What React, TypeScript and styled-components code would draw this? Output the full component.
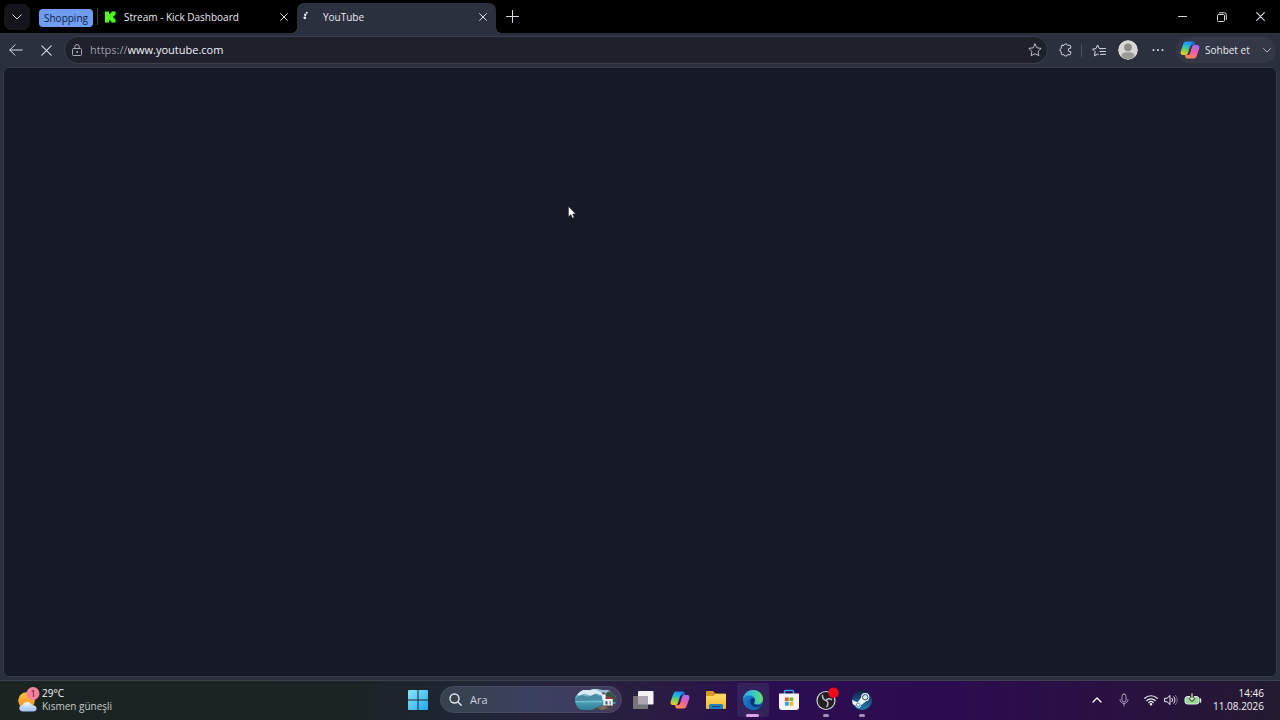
import React from "react";
import styled, { createGlobalStyle } from "styled-components";

const FONT = `"Open Sans", "Noto Sans", sans-serif`;

const GlobalStyle = createGlobalStyle`
  * { box-sizing: border-box; }
  html, body { margin: 0; background: #151a26; }
  body { font-family: ${FONT}; font-size: 10px; line-height: 14px; color: #e8e9ee; }
  button, input { font: inherit; color: inherit; margin: 0; padding: 0; border: 0; background: none; outline: none; }
  svg { display: block; flex: none; }
`;

const Desktop = styled.div`
  min-height: 100vh;
  display: flex;
  flex-direction: column;
  background: #2b303f;
`;

const TabStrip = styled.header`
  height: 33px;
  flex: none;
  display: flex;
  align-items: center;
  padding-left: 4px;
  background: #000;
`;

const TabMenuButton = styled.button`
  width: 26px;
  height: 26px;
  display: grid;
  place-items: center;
  border-radius: 7px;
  background: #14161c;
`;

const GroupChip = styled.button`
  height: 18px;
  margin: 3px 4px 0 9px;
  padding: 0 5px;
  border-radius: 4px;
  background: #6f9df2;
  color: #10203f;
  font-size: 10px;
  line-height: 17px;
`;

const Separator = styled.span<{ $height: number; $color: string }>`
  width: 1px;
  height: ${(p) => p.$height}px;
  flex: none;
  background: ${(p) => p.$color};
`;

const Tabs = styled.div`
  display: flex;
  align-self: stretch;
`;

const Tab = styled.div<{ $active?: boolean }>`
  position: relative;
  width: 199px;
  margin-top: 3px;
  padding: 0 8px 2px 6px;
  display: flex;
  align-items: center;
  border-radius: 7px 7px 0 0;
  background: ${(p) => (p.$active ? "#2b303f" : "transparent")};

  &::before,
  &::after {
    content: "";
    display: ${(p) => (p.$active ? "block" : "none")};
    position: absolute;
    bottom: 0;
    width: 6px;
    height: 6px;
  }
  &::before {
    left: -6px;
    background: radial-gradient(circle at 0 0, transparent 6px, #2b303f 6px);
  }
  &::after {
    right: -6px;
    background: radial-gradient(circle at 100% 0, transparent 6px, #2b303f 6px);
  }
`;

const TabTitle = styled.span`
  flex: 1;
  margin-left: 8px;
  white-space: nowrap;
`;

const IconButton = styled.button<{ $w?: number; $h?: number }>`
  width: ${(p) => p.$w ?? 30}px;
  height: ${(p) => p.$h ?? 26}px;
  flex: none;
  display: grid;
  place-items: center;
`;

const WindowControls = styled.div`
  margin-left: auto;
  display: flex;
`;

const Toolbar = styled.nav`
  height: 34px;
  flex: none;
  display: flex;
  align-items: center;
  padding: 0 4px 0 1px;
`;

const AddressBar = styled.label`
  flex: 1;
  height: 28px;
  margin: 0 3px;
  padding-left: 6px;
  display: flex;
  align-items: center;
  border: 1px solid #3a3e4c;
  border-radius: 14px;
  background: #1e212c;
  font-size: 11px;
  line-height: 16px;
`;

const Scheme = styled.span`
  margin-left: 7px;
  color: #9b9faa;
`;

const AddressInput = styled.input`
  flex: 1;
  min-width: 0;
  color: #f3f4f8;
`;

const Avatar = styled.button`
  width: 20px;
  height: 20px;
  margin: 0 5px 0 2px;
  border-radius: 50%;
  overflow: hidden;
`;

const ChatPill = styled.button`
  height: 26px;
  width: 100px;
  margin-left: 3px;
  padding: 0 5px 0 4px;
  display: flex;
  align-items: center;
  gap: 5px;
  border-radius: 13px;
  background: #333746;
  white-space: nowrap;

  svg:last-child { margin-left: auto; }
`;

const PageView = styled.main`
  flex: 1;
  margin: 0 3px 3px;
  border: 1px solid #363b49;
  border-radius: 6px;
  background: #151a26;
`;

const Pointer = styled.svg`
  position: absolute;
  left: 568px;
  top: 206px;
`;

const Taskbar = styled.footer`
  height: 40px;
  flex: none;
  display: grid;
  grid-template-columns: 1fr auto 1fr;
  align-items: center;
  padding-bottom: 2px;
  border-top: 1px solid #3b404d;
  background: linear-gradient(
    90deg,
    #1c2422 0%,
    #1a2424 27%,
    #1e2634 36%,
    #291e40 50%,
    #2b0e50 60%,
    #2c0c50 74%,
    #2a1042 86%,
    #231a30 100%
  );
`;

const Weather = styled.button`
  justify-self: start;
  margin-left: 18px;
  display: flex;
  align-items: center;
  gap: 2px;
  text-align: left;
  color: #c3c9c7;
  line-height: 13px;

  strong { display: block; font-weight: 400; color: #f4f6f5; }
`;

const TaskCenter = styled.div`
  display: flex;
  align-items: center;
`;

const SearchBox = styled.label`
  width: 182px;
  height: 27px;
  margin: 0 5px 0 6px;
  padding: 0 3px 0 8px;
  display: flex;
  align-items: center;
  border: 1px solid #4b4c63;
  border-radius: 14px;
  background: linear-gradient(90deg, #36434b, #3a4060 50%, #43395c);
  font-size: 11px;

  input { flex: 1; min-width: 0; margin-left: 8px; }
  input::placeholder { color: #ccd0dc; opacity: 1; }
`;

const AppRow = styled.div`
  width: 251px;
  display: flex;
  justify-content: space-between;
`;

const AppButton = styled.button<{ $state?: "active" | "open" }>`
  position: relative;
  width: 32px;
  height: 34px;
  display: grid;
  place-items: center;
  border-radius: 4px;
  background: ${(p) => (p.$state === "active" ? "#34225a" : "transparent")};

  &::after {
    content: "";
    display: ${(p) => (p.$state ? "block" : "none")};
    position: absolute;
    bottom: 0;
    left: calc(50% - ${(p) => (p.$state === "active" ? 7 : 3)}px);
    width: ${(p) => (p.$state === "active" ? 13 : 6)}px;
    height: 3px;
    border-radius: 2px;
    background: ${(p) => (p.$state === "active" ? "#dba3ea" : "#a58fb8")};
  }
`;

const Tray = styled.div`
  justify-self: end;
  display: flex;
  align-items: center;
  padding-right: 16px;
`;

const TrayStatus = styled.button`
  display: flex;
  align-items: center;
  gap: 6px;
  margin: 0 11px 0 6px;
`;

const Clock = styled.button`
  text-align: right;
  line-height: 13px;
  color: #f4f2f7;

  time { display: block; }
`;

type StrokeProps = { w?: number; h?: number; box?: string; color?: string; sw?: number; children: React.ReactNode };
const Line = ({ w = 12, h = 12, box, color = "#d9dbe2", sw = 1, children }: StrokeProps) => (
  <svg width={w} height={h} viewBox={box ?? `0 0 ${w} ${h}`} fill="none" stroke={color} strokeWidth={sw}
    strokeLinecap="round" strokeLinejoin="round" aria-hidden="true">{children}</svg>
);

const Cross = ({ size = 8, color }: { size?: number; color?: string }) => (
  <Line w={size} h={size} box="0 0 8 8" sw={size > 9 ? 0.8 : 1} color={color}><path d="M.6.6l6.8 6.8M7.4.6L.6 7.4" /></Line>
);

const CopilotIcon = ({ id, size }: { id: string; size: number }) => (
  <svg width={size} height={size} viewBox="0 0 20 20" aria-hidden="true">
    <defs>
      <linearGradient id={`${id}a`} x1="0.6" y1="0" x2="0.3" y2="1">
        <stop offset="0" stopColor="#1c8df0" /><stop offset=".35" stopColor="#22b8d8" />
        <stop offset=".65" stopColor="#75cf5c" /><stop offset="1" stopColor="#f5c62b" />
      </linearGradient>
      <linearGradient id={`${id}b`} x1="0.7" y1="0" x2="0.3" y2="1">
        <stop offset="0" stopColor="#a66cf0" /><stop offset=".45" stopColor="#ec5aa8" />
        <stop offset="1" stopColor="#ff8a4a" />
      </linearGradient>
    </defs>
    <path d="M6.3 1.5h6.2c1.2 0 1.8.8 2.1 1.8l.5 1.7H12c-1.2 0-1.7.7-2.1 1.8L8 13c-.4 1.3-1 2-2.300 2H3C.8 15 .2 13.300.7 11.500L3.300 4c.6-1.700 1.500-2.500 3-2.500z" fill={`url(#${id}a)`} />
    <path d="M13.700 18.500H7.500c-1.200 0-1.800-.8-2.100-1.800L4.900 15H8c1.200 0 1.700-.7 2.100-1.800L12 7c.4-1.300 1-2 2.300-2H17c2.200 0 2.800 1.700 2.300 3.500L16.700 16c-.6 1.700-1.500 2.500-3 2.500z" fill={`url(#${id}b)`} />
    <path d="M12.500 1.500c1.200 0 1.800.8 2.100 1.800l.5 1.700H12c-.8 0-1.300.4-1.700 1z" fill="#2360d8" />
  </svg>
);

const KickIcon = () => (
  <svg width="12" height="12" viewBox="0 0 12 12" aria-hidden="true">
    <path fill="#4dfc1e" d="M1 .5h4v2.500h1.300V1.700h1.200V.5h4v3.700h-1.300v1.200H9v1.200h1.200v1.200h1.300v3.700h-4v-1H6.300V9.200H5v2.300H1z" />
  </svg>
);

const WeatherIcon = () => (
  <svg width="22" height="26" viewBox="0 0 22 26" aria-hidden="true">
    <defs>
      <linearGradient id="sun" x1="0" y1="0" x2="0" y2="1"><stop offset="0" stopColor="#ffc43a" /><stop offset="1" stopColor="#f08a2a" /></linearGradient>
      <linearGradient id="cloud" x1="0" y1="0" x2="0" y2="1"><stop offset="0" stopColor="#f2f8ff" /><stop offset="1" stopColor="#9dbdf0" /></linearGradient>
    </defs>
    <circle cx="8.500" cy="13.500" r="8.300" fill="url(#sun)" />
    <path d="M5 24.500c-2.300 0-3.700-1.400-3.700-3.200S2.800 18.100 4.700 18.100C5.400 16 7.200 15 9.300 15c2.400 0 4 1.400 4.700 3.300 2.600-.3 4.600 1 4.600 3.200 0 1.900-1.500 3-3.500 3z" fill="url(#cloud)" />
    <circle cx="15" cy="6.500" r="6.500" fill="#fb7f9f" />
    <text x="15" y="10" fontSize="9" textAnchor="middle" fill="#43202c">1</text>
  </svg>
);

const StartIcon = () => (
  <svg width="20" height="20" viewBox="0 0 20 20" aria-hidden="true">
    <defs><linearGradient id="win" x1="0" y1="0" x2="1" y2="1"><stop offset="0" stopColor="#8be6fb" /><stop offset="1" stopColor="#22a7ee" /></linearGradient></defs>
    <path fill="url(#win)" d="M1 0h8.500v9.500H0V1a1 1 0 0 1 1-1zM10.500 0H19a1 1 0 0 1 1 1v8.500h-9.500zM0 10.500h9.500V20H1a1 1 0 0 1-1-1zM10.500 10.500H20V19a1 1 0 0 1-1 1h-8.500z" />
  </svg>
);

const LighthouseArt = () => (
  <svg width="44" height="23" viewBox="0 0 42 21" preserveAspectRatio="none" aria-hidden="true">
    <defs>
      <linearGradient id="sea" x1="0" y1="0" x2="0" y2="1"><stop offset="0" stopColor="#a8d7ea" /><stop offset=".5" stopColor="#56a6c2" /><stop offset="1" stopColor="#2e7b90" /></linearGradient>
      <clipPath id="scene"><path d="M1 10c0-3 2-4 4-6 3-3 7-2 10-2 4-2 9-1 13 0 5-1 8 1 9 4 3 1 4 4 3 7-1 4-4 7-9 7H9c-5 0-8-4-8-10z" /></clipPath>
    </defs>
    <g clipPath="url(#scene)">
      <rect width="42" height="21" fill="url(#sea)" />
      <path d="M0 10l6-4 7 2 7-3 8 4v2L0 12z" fill="#4a8ba6" />
      <path d="M3 6c3-4 7-5 10-4 4-2 9 0 13 2l2 3-7-2-5 2-6-2-5 2z" fill="#d9edf5" />
      <path d="M0 12h27v1H0z" fill="#7cc6d2" />
      <path d="M14 21c5-1 8-4 13-5l15-2v7z" fill="#4c4348" />
      <path d="M30 6c2-4 6-4 8-1 3 1 4 4 3 8h-8z" fill="#345247" />
      <path d="M28 10h9v6h-9z" fill="#eef0f0" />
      <path d="M27 10l2-2h7l2 2zM27 4h3v2h-3z" fill="#8f3d36" />
      <path d="M27 6h3v5h-3z" fill="#f5f5f2" />
      <path d="M30 12h2v3h-2zM34 12h1v3h-1z" fill="#41566d" />
      <path d="M22 18l6-2 5 2-6 2z" fill="#7b6c5e" />
    </g>
  </svg>
);

const TaskViewIcon = () => (
  <svg width="22" height="22" viewBox="0 0 22 22" aria-hidden="true">
    <rect x="6" y="2" width="15.500" height="13.500" rx="1" fill="#f3f2f5" />
    <rect x="1" y="7" width="15" height="13" rx="1" fill="#77747d" />
    <path d="M6 7h10v8.500H6z" fill="#aaa8ae" />
  </svg>
);

const FolderIcon = () => (
  <svg width="22" height="20" viewBox="0 0 22 20" aria-hidden="true">
    <defs><linearGradient id="fold" x1="0" y1="0" x2="0" y2="1"><stop offset="0" stopColor="#ffdc68" /><stop offset="1" stopColor="#f2b92f" /></linearGradient></defs>
    <path d="M2 1h6l2.500 2.500H20a1 1 0 0 1 1 1V10H1V2a1 1 0 0 1 1-1z" fill="#d99a1e" />
    <path d="M1 6h7l2.500-2H20a1 1 0 0 1 1 1v13a1 1 0 0 1-1 1H2a1 1 0 0 1-1-1z" fill="url(#fold)" />
    <path d="M4 19v-3.500A1.500 1.500 0 0 1 5.500 14h11a1.500 1.500 0 0 1 1.500 1.500V19z" fill="#1f7fc0" />
    <path d="M7 16h8v1.200H7z" fill="#124f86" />
  </svg>
);

const EdgeIcon = () => (
  <svg width="22" height="22" viewBox="0 0 22 22" aria-hidden="true">
    <defs>
      <linearGradient id="edgeTop" x1="0" y1=".5" x2="1" y2=".4"><stop offset="0" stopColor="#2aa5e8" /><stop offset=".55" stopColor="#35c9c6" /><stop offset="1" stopColor="#72e05c" /></linearGradient>
      <linearGradient id="edgeLow" x1="0" y1="0" x2="1" y2="1"><stop offset="0" stopColor="#1c8fdd" /><stop offset="1" stopColor="#114a9c" /></linearGradient>
    </defs>
    <circle cx="11" cy="11" r="10" fill="url(#edgeLow)" />
    <path d="M1 10.500C1.300 5 5.700 1 11 1c6 0 10 4.500 10 9 0 3.500-2.500 5.300-5.300 5.300-2.400 0-3.700-.8-3.700-1.600 0-.7 1-1.200 1-3C13 8.200 10.700 6.500 7.500 6.500 4 6.500 1.700 8.500 1 10.500z" fill="url(#edgeTop)" />
    <path d="M9.400 9.500c-2 2.700-1.400 6.900 2.300 8.700 2.800 1.300 5.700.6 7.700-1.400-2 3-5 4.200-8.200 4.200C7 20.500 5 17.500 5.300 14.300c.2-2.400 2-4.300 4.100-4.800z" fill="#1669b8" />
    <path d="M9.400 9.500c-.9 1.200-1.300 2.800-.9 4.400 1 3 4.500 4.300 7.500 3.800 1.900-.3 3.200-1 3.800-1.600-2 .9-6.600.5-7.700-1.400-.3-.5-.2-.9.100-1.300.8-1 .9-2.300.3-3.400-.7-1.200-2.200-1.200-3.100-.5z" fill="#0b3472" />
  </svg>
);

const StoreIcon = () => (
  <svg width="22" height="22" viewBox="0 0 22 22" aria-hidden="true">
    <path d="M6.500 5V2.500a1 1 0 0 1 1-1h7a1 1 0 0 1 1 1V5" fill="none" stroke="#2fa4e8" strokeWidth="1.500" />
    <path d="M1 4.500h20V18a3 3 0 0 1-3 3H4a3 3 0 0 1-3-3z" fill="#f4f4f7" />
    <path d="M7 8.500h3.700v3.700H7z" fill="#e9512c" /><path d="M11.500 8.500h3.700v3.700h-3.700z" fill="#7cb82f" />
    <path d="M7 13h3.700v3.700H7z" fill="#25a2e2" /><path d="M11.500 13h3.700v3.700h-3.700z" fill="#f6b61c" />
  </svg>
);

const ObsIcon = () => (
  <svg width="26" height="26" viewBox="0 0 26 26" aria-hidden="true">
    <circle cx="13" cy="13.500" r="9" fill="#211f24" stroke="#d8d5dc" strokeWidth="1.200" />
    <path d="M9.500 8.300c-.1 3 1.200 4.800 3.800 5.200M18.500 12.500c-2.500-1.500-4.500-.8-5.200 1M13.800 19.500c1.500-2 1.200-4.500-.5-6" fill="none" stroke="#bdbac2" strokeWidth="1.500" strokeLinecap="round" />
    <circle cx="20.500" cy="5.800" r="5.200" fill="#f3081a" />
  </svg>
);

const SteamIcon = () => (
  <svg width="22" height="22" viewBox="0 0 22 22" aria-hidden="true">
    <defs>
      <linearGradient id="steam" x1="0" y1="0" x2="0" y2="1"><stop offset="0" stopColor="#10203f" /><stop offset="1" stopColor="#2380b6" /></linearGradient>
      <clipPath id="steamDisc"><circle cx="11" cy="11" r="10" /></clipPath>
    </defs>
    <circle cx="11" cy="11" r="10" fill="url(#steam)" />
    <g clipPath="url(#steamDisc)">
      <path d="M0 10.500l6.500 2.800L10.300 8.500l4.700 4-4.800 3.400c-.3 3.500-4.700 3.800-5.600.6L0 14.700z" fill="#f2f6fa" />
      <circle cx="14.200" cy="8.200" r="4.100" fill="#f2f6fa" />
      <circle cx="14.200" cy="8.200" r="2.700" fill="#dfe8f0" stroke="#1b3d65" strokeWidth=".9" />
      <circle cx="7.200" cy="15.800" r="1.800" fill="none" stroke="#276c9d" strokeWidth=".7" />
    </g>
  </svg>
);

export default function App() {
  return (
    <Desktop>
      <GlobalStyle />
      <TabStrip>
        <TabMenuButton aria-label="Tab actions"><Line w={10} h={6}><path d="M.7.700L5 5 9.300.7" /></Line></TabMenuButton>
        <GroupChip>Shopping</GroupChip>
        <Separator $height={17} $color="#3b3e46" />
        <Tabs>
          <Tab>
            <KickIcon />
            <TabTitle>Stream - Kick Dashboard</TabTitle>
            <IconButton $w={10} $h={16} aria-label="Close tab"><Cross /></IconButton>
          </Tab>
          <Tab $active>
            <svg width="12" height="12" viewBox="0 0 12 12" fill="#eef0f5" aria-hidden="true">
              <circle cx="3.800" cy="1.800" r="1" /><circle cx="2.200" cy="3.800" r="1.200" /><circle cx="1.800" cy="6.800" r="1.400" />
            </svg>
            <TabTitle>YouTube</TabTitle>
            <IconButton $w={10} $h={16} aria-label="Close tab"><Cross /></IconButton>
          </Tab>
        </Tabs>
        <IconButton $w={34} aria-label="New tab"><Line w={13} h={13}><path d="M6.500.5v12M.5 6.500h12" /></Line></IconButton>
        <WindowControls>
          <IconButton $w={39} aria-label="Minimize"><Line w={9} h={4}><path d="M.5 1.500h8" /></Line></IconButton>
          <IconButton $w={39} aria-label="Restore">
            <Line w={10} h={10}><path d="M1.500 2.500h5a1 1 0 0 1 1 1v5a1 1 0 0 1-1 1h-5a1 1 0 0 1-1-1v-5a1 1 0 0 1 1-1zM2.500.8H7.500A1.800 1.800 0 0 1 9.300 2.600v5" /></Line>
          </IconButton>
          <IconButton $w={39} aria-label="Close"><Cross size={9} /></IconButton>
        </WindowControls>
      </TabStrip>

      <Toolbar>
        <IconButton aria-label="Back"><Line w={14} h={12}><path d="M13.300 6H.8M6 .8L.8 6 6 11.200" /></Line></IconButton>
        <IconButton aria-label="Stop"><Cross size={11} /></IconButton>
        <AddressBar>
          <Line w={12} h={12} color="#a9adb8"><path d="M2.500 4.500h7a1 1 0 0 1 1 1v5a1 1 0 0 1-1 1h-7a1 1 0 0 1-1-1v-5a1 1 0 0 1 1-1zM3.800 4.300V2.700a2.200 2.200 0 0 1 4.400 0v1.600" /><circle cx="6" cy="8" r=".5" fill="#a9adb8" /></Line>
          <Scheme>https://</Scheme>
          <AddressInput aria-label="Address" defaultValue="www.youtube.com" />
          <IconButton $w={24} aria-label="Add to favorites">
            <Line w={14} h={14} color="#b9bcc6"><path d="M7 .9l1.900 3.900 4.300.6-3.100 3 .7 4.300L7 10.700l-3.800 2 .7-4.300-3.100-3 4.300-.6z" /></Line>
          </IconButton>
        </AddressBar>
        <IconButton aria-label="Extensions">
          <Line w={14} h={14}><path d="M3.300 2.300h1.700a1.800 1.800 0 0 1 3.500 0h2.200a1 1 0 0 1 1 1V5.200H11a1.700 1.700 0 0 0 0 3.500h.7v2a1 1 0 0 1-1 1H8.500a1.800 1.800 0 0 1-3.500 0H3.300a1 1 0 0 1-1-1V8.800a1.800 1.800 0 0 1 0-3.500v-2a1 1 0 0 1 1-1z" /></Line>
        </IconButton>
        <Separator $height={13} $color="#4b4f5d" />
        <IconButton $w={34} aria-label="Favorites">
          <Line w={14} h={13}><path d="M8.500 4.600H7.400L5.600 1 3.900 4.600l-3.400.5 2.600 2.600-.6 4.100 3.100-1.700.8.500M8.500 4.600h5M8 7.500h5.500M8.500 10.400h5" /></Line>
        </IconButton>
        <Avatar aria-label="Profile">
          <svg width="20" height="20" viewBox="0 0 20 20" aria-hidden="true">
            <circle cx="10" cy="10" r="10" fill="#d8d7d3" /><circle cx="10" cy="7.300" r="3.900" fill="#8f8e8b" />
            <path d="M3.500 16.500c0-3 2-4.200 6.500-4.200s6.500 1.200 6.500 4.200C14.500 18.400 12.500 19 10 19s-4.500-.6-6.500-2.500z" fill="#9d9c99" />
          </svg>
        </Avatar>
        <IconButton aria-label="Settings and more">
          <svg width="12" height="4" viewBox="0 0 12 4" fill="#e3e4ea" aria-hidden="true"><circle cx="1.500" cy="2" r="1" /><circle cx="6" cy="2" r="1" /><circle cx="10.500" cy="2" r="1" /></svg>
        </IconButton>
        <ChatPill>
          <CopilotIcon id="pill" size={20} />
          <span>Sohbet et</span>
          <Line w={8} h={5} color="#aeb1bb"><path d="M.5.5L4 4 7.500.5" /></Line>
        </ChatPill>
      </Toolbar>

      <PageView>
        <Pointer width="8" height="13" viewBox="0 0 8 13" aria-hidden="true">
          <path d="M.5.5v10.200l2.400-2.200 1.500 3.600 1.700-.7-1.500-3.500h3z" fill="#fff" stroke="#111" strokeWidth=".4" />
        </Pointer>
      </PageView>

      <Taskbar>
        <Weather>
          <WeatherIcon />
          <span><strong>29°C</strong>Kısmen güneşli</span>
        </Weather>
        <TaskCenter>
          <AppButton aria-label="Start"><StartIcon /></AppButton>
          <SearchBox>
            <Line w={13} h={13} sw={1.4} color="#e4e8ee"><circle cx="5.500" cy="5.500" r="4.500" /><path d="M9 9l3.200 3.200" /></Line>
            <input type="text" placeholder="Ara" aria-label="Ara" />
            <LighthouseArt />
          </SearchBox>
          <AppRow>
            <AppButton aria-label="Task view"><TaskViewIcon /></AppButton>
            <AppButton aria-label="Copilot"><CopilotIcon id="task" size={20} /></AppButton>
            <AppButton aria-label="File Explorer"><FolderIcon /></AppButton>
            <AppButton aria-label="Edge" $state="active"><EdgeIcon /></AppButton>
            <AppButton aria-label="Store"><StoreIcon /></AppButton>
            <AppButton aria-label="OBS Studio" $state="open"><ObsIcon /></AppButton>
            <AppButton aria-label="Steam" $state="open"><SteamIcon /></AppButton>
          </AppRow>
        </TaskCenter>
        <Tray>
          <IconButton $w={26} aria-label="Hidden icons"><Line w={10} h={6} sw={1.300} color="#fff"><path d="M1 5l4-4 4 4" /></Line></IconButton>
          <IconButton $w={28} aria-label="Microphone">
            <Line w={10} h={14} color="#a99bb5"><path d="M5 1a2 2 0 0 1 2 2v4a2 2 0 0 1-4 0V3a2 2 0 0 1 2-2zM1 6.500a4 4 0 0 0 8 0M5 10.500V13" /></Line>
          </IconButton>
          <TrayStatus aria-label="Network, volume, battery">
            <Line w={14} h={12} sw={1.200} color="#efecf3"><path d="M.8 4.300a8.800 8.800 0 0 1 12.400 0M2.800 6.500a6 6 0 0 1 8.400 0M4.800 8.500a3.200 3.200 0 0 1 4.400 0" /><circle cx="7" cy="10.300" r=".7" fill="#efecf3" /></Line>
            <Line w={14} h={12} color="#efecf3"><path d="M1 4.300h2L6 1.500v9L3 7.700H1zM8 4.300a2.500 2.500 0 0 1 0 3.400M9.800 2.800a4.600 4.600 0 0 1 0 6.400" /><path d="M11.500 1.300a6.800 6.800 0 0 1 0 9.400" stroke="#75697f" /></Line>
            <svg width="18" height="14" viewBox="0 0 18 14" aria-hidden="true">
              <rect x="1" y="3.500" width="14" height="7.500" rx="2.500" fill="#8fdc8a" stroke="#efecf3" />
              <path d="M16.500 6v3" stroke="#efecf3" strokeWidth="1.300" strokeLinecap="round" />
              <path d="M8 0v4" stroke="#2a1a35" strokeWidth="4" /><path d="M8 .5V7M5.500 4.800L8 7.300l2.500-2.500" fill="none" stroke="#1c3222" strokeWidth="2.400" />
              <path d="M8 .5V7M5.800 4.800L8 7l2.200-2.200" fill="none" stroke="#f4f2f7" strokeWidth="1.100" />
            </svg>
          </TrayStatus>
          <Clock><time>14:46</time><time>11.08.2026</time></Clock>
        </Tray>
      </Taskbar>
    </Desktop>
  );
}
